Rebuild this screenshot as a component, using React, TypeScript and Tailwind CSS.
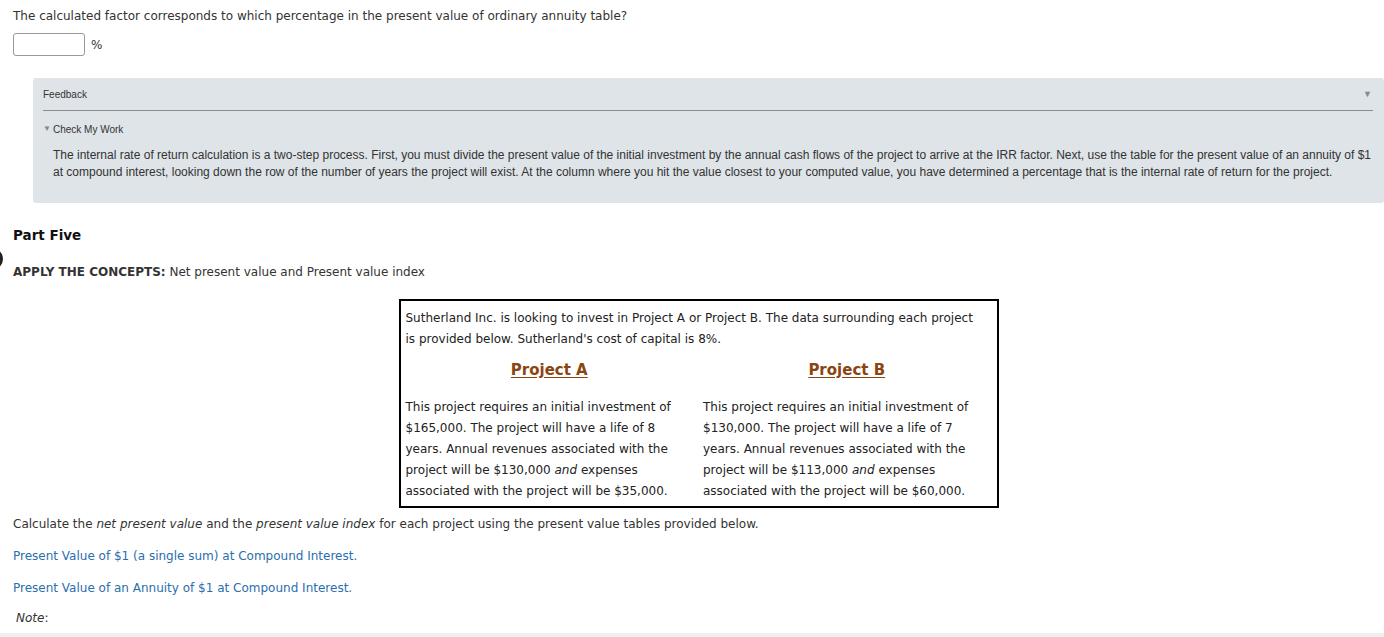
import React from 'react'

const tahoma = { fontFamily: '"DejaVu Sans", Verdana, sans-serif' }
const arial = { fontFamily: '"Liberation Sans", Arial, sans-serif' }

function FeedbackPanel() {
  return (
    <div
      className="ml-[20px] mt-[22px] rounded-[3px] bg-[#dee4e8] pb-[22px] pl-[10px] pr-[11px] pt-[8px] text-[#333]"
      style={arial}
    >
      <div className="flex h-[16px] items-center justify-between">
        <span className="text-[10px]">Feedback</span>
        <span className="mr-[1px] text-[9px] leading-none text-[#888]">▼</span>
      </div>
      <div className="mt-[8px] border-t border-[#8a8e91]" />
      <div className="mt-[11px] flex h-[14px] items-center text-[10px]">
        <span className="mr-[2px] text-[8px] text-[#888]">▼</span>
        Check My Work
      </div>
      <p className="mt-[11px] pl-[10px] text-[12px] leading-[17px]">
        The internal rate of return calculation is a two-step process. First, you must divide the present value of
        the initial investment by the annual cash flows of the project to arrive at the IRR factor. Next, use the table
        for the present value of an annuity of $1 at compound interest, looking down the row of the number of years the
        project will exist. At the column where you hit the value closest to your computed value, you have determined a
        percentage that is the internal rate of return for the project.
      </p>
    </div>
  )
}

function ProjectColumn({ title, invest, life, revenue, expenses }: { title: string; invest: string; life: number; revenue: string; expenses: string }) {
  return (
    <div>
      <div className="flex h-[34px] items-start justify-center pl-[8px] pt-[1px]">
        <span className="text-[15px] font-bold text-[#8b4513] underline underline-offset-[2px]">{title}</span>
      </div>
      <p className="mt-[4px]">
        This project requires an initial investment of ${invest}. The project will have a life of {life} years. Annual
        revenues associated with the project will be ${revenue} <i>and</i> expenses associated with the project will be $
        {expenses}.
      </p>
    </div>
  )
}

export default function App() {
  return (
    <div className="relative min-h-[637px] bg-white pl-[13px] text-[12px] text-[#333]" style={tahoma}>
      <p className="pt-[8px] leading-[17px]">
        The calculated factor corresponds to which percentage in the present value of ordinary annuity table?
      </p>
      <div className="mt-[8px] flex items-center">
        <div className="h-[23px] w-[72px] rounded-[3px] border border-[#999] bg-white" />
        <span className="ml-[6px]">%</span>
      </div>

      <FeedbackPanel />

      <h3 className="mt-[23px] text-[13.5px] font-bold leading-[18px] text-[#111]">Part Five</h3>

      {/* clipped marker on the left edge */}
      <div className="absolute left-[-20px] top-[248px] h-[22px] w-[23px] rounded-full bg-[#222]" />

      <p className="mt-[20px] leading-[17px]">
        <b>APPLY THE CONCEPTS:</b> Net present value and Present value index
      </p>

      <div className="mt-[18px] flex justify-center">
        <div className="w-[600px] border-2 border-black pb-[4px] pl-[5px] pr-[14px] pt-[7px] leading-[21px] text-[#222]">
          <p>
            Sutherland Inc. is looking to invest in Project A or Project B. The data surrounding each project is provided
            below. Sutherland's cost of capital is 8%.
          </p>
          <div className="mt-[9px] grid grid-cols-2 gap-[18px]">
            <ProjectColumn title="Project A" invest="165,000" life={8} revenue="130,000" expenses="35,000" />
            <ProjectColumn title="Project B" invest="130,000" life={7} revenue="113,000" expenses="60,000" />
          </div>
        </div>
      </div>

      <p className="mt-[8px] leading-[17px]">
        Calculate the <i>net present value</i> and the <i>present value index</i> for each project using the present value
        tables provided below.
      </p>
      <p className="mt-[15px] leading-[17px] text-[#2a6ead]">Present Value of $1 (a single sum) at Compound Interest.</p>
      <p className="mt-[15px] leading-[17px] text-[#2a6ead]">Present Value of an Annuity of $1 at Compound Interest.</p>
      <p className="ml-[3px] mt-[13px] leading-[17px]">
        <i>Note</i>:
      </p>
      <div className="absolute bottom-0 left-0 right-0 h-[4px] bg-[#f0f0f0]" />
    </div>
  )
}
